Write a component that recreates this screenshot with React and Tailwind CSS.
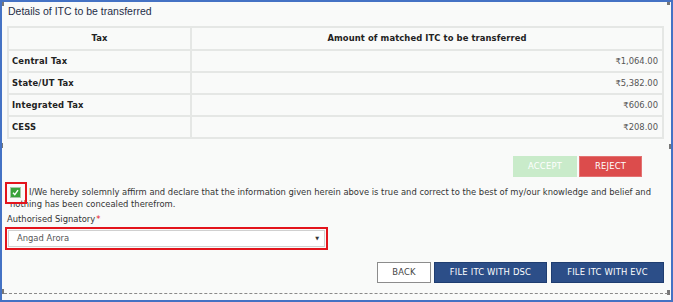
import React from "react";

const rows = [
  ["Central Tax", "₹1,064.00"],
  ["State/UT Tax", "₹5,382.00"],
  ["Integrated Tax", "₹606.00"],
  ["CESS", "₹208.00"],
];

function Handle({ className }) {
  return <div className={"absolute w-[3px] h-[5px] bg-[#777] " + className} />;
}

export default function App() {
  return (
    <div className="w-[673px] h-[302px] relative bg-[#f9faf9] border-2 border-[#4472c4] overflow-hidden font-['DejaVu_Sans',sans-serif] text-[8.4px] text-[#333]">
      <Handle className="-left-[1px] -top-[1px]" />
      <Handle className="-left-[2px] top-[141px]" />
      <Handle className="-left-[1px] top-[287px]" />
      <Handle className="left-[665px] -top-[2px]" />
      <Handle className="left-[667px] top-[142px]" />
      <Handle className="left-[665px] top-[288px]" />
      <div className="absolute left-[2px] right-[3px] top-[291px] border-t border-dashed border-[#8a8a8a]" />

      <div className="h-[18px] pl-[6px] font-['Liberation_Sans',Arial,sans-serif] text-[10.5px] leading-[18px] text-[#1f2d47]">
        Details of ITC to be transferred
      </div>

      <div className="ml-[5px] mt-[6px] w-[657px] border-2 border-[#e5e7e5]">
        <div className="flex h-[21px] items-center font-bold text-[#222] tracking-[0.1px]">
          <div className="w-[183px] h-full flex items-center justify-center border-r-2 border-[#e5e7e5]">Tax</div>
          <div className="flex-1 text-center">Amount of matched ITC to be transferred</div>
        </div>
        {rows.map(([k, v]) => (
          <div key={k} className="flex h-[22px] border-t-2 border-[#e5e7e5]">
            <div className="w-[183px] h-full flex items-center pl-[3px] border-r-2 border-[#e5e7e5] font-bold text-[#222] tracking-[0.2px]">{k}</div>
            <div className="flex-1 flex items-center justify-end pr-[4px] text-[#555]">{v}</div>
          </div>
        ))}
      </div>

      <div className="mt-[17px] flex justify-end gap-[2px] mr-[29px] tracking-[0.2px]">
        <div className="w-[64px] h-[21px] flex items-center justify-center bg-[#c9ebca] text-white">ACCEPT</div>
        <div className="w-[63px] h-[21px] flex items-center justify-center bg-[#dc4c4c] border border-[#e37272] text-white">REJECT</div>
      </div>

      <p className="mt-[9px] pl-[8px] pr-[8px] leading-[12px] text-[#333]">
        <span className="relative inline-block align-middle w-[11px] h-[11px] mr-[8px] -mt-[1px]">
          <span className="absolute -left-[5px] -top-[5px] w-[22px] h-[22px] border-2 border-[#e3141c]" />
          <span className="absolute inset-0 bg-[#3aa23a] border border-[#a9c8a9] flex items-center justify-center">
            <svg width="7" height="7" viewBox="0 0 7 7">
              <path d="M1 3.8 L2.8 5.6 L6 1.2" stroke="white" strokeWidth="1.4" fill="none" />
            </svg>
          </span>
        </span>
        I/We hereby solemnly affirm and declare that the information given herein above is true and correct to the best of my/our knowledge and belief and nothing has been concealed therefrom.
      </p>

      <div className="mt-[3px] pl-[5px] leading-[12px] text-[#333]">
        Authorised Signatory<span className="text-[#e3141c] ml-[1px]">*</span>
      </div>

      <div className="mt-[2px] ml-[3px] w-[323px] h-[23px] border-2 border-[#e3141c] p-[1px]">
        <div className="h-full bg-white border border-[#d0d0d0] flex items-center justify-between pl-[8px] pr-[5px] text-[#555]">
          <span>Angad Arora</span>
          <span className="text-[5px] text-[#333]">▼</span>
        </div>
      </div>

      <div className="mt-[12px] flex justify-end mr-[7px] tracking-[0.2px]">
        <div className="w-[54px] h-[21px] flex items-center justify-center bg-white border border-[#8c8c8c] text-[#444]">BACK</div>
        <div className="ml-[3px] w-[113px] h-[21px] flex items-center justify-center bg-[#2c4e88] border border-[#1f3d70] text-white">FILE ITC WITH DSC</div>
        <div className="ml-[4px] w-[113px] h-[21px] flex items-center justify-center bg-[#2c4e88] border border-[#1f3d70] text-white">FILE ITC WITH EVC</div>
      </div>
    </div>
  );
}
